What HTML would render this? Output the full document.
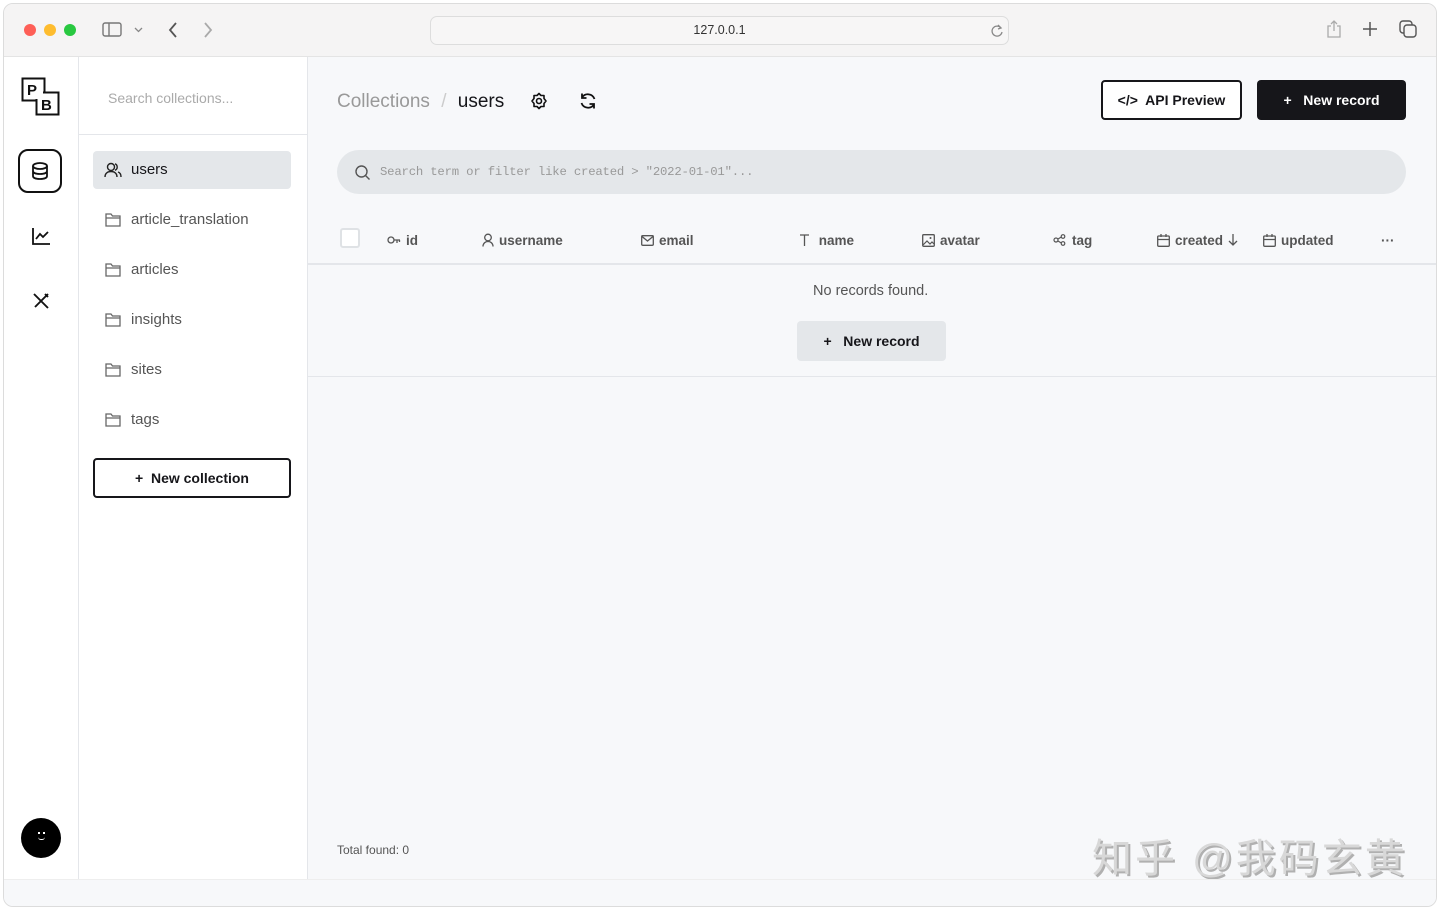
<!DOCTYPE html>
<html><head><meta charset="utf-8"><style>
*{box-sizing:border-box;margin:0;padding:0}
body{width:1440px;height:910px;background:#fff;font-family:"Liberation Sans","Noto Sans CJK SC",sans-serif;position:relative;overflow:hidden;color:#16161a}
.a{position:absolute}
.win{left:3px;top:3px;width:1434px;height:904px;border:1px solid #dcdcdc;border-radius:10px;overflow:hidden;background:#f7f8fa}
.tb{left:0;top:0;width:1434px;height:53px;background:#f5f4f4;border-bottom:1px solid #e4e4e4}
.dot{width:12px;height:12px;border-radius:50%;top:20px}
svg{position:absolute;overflow:visible}
.item{left:89px;width:198px;height:38px;border-radius:4px;font-size:15px;color:#555;}
.item span{position:absolute;left:38px;top:10px}
.th{top:227px;height:18px;font-size:13.5px;font-weight:bold;color:#555;display:flex;align-items:center;gap:5px}
.th svg{position:static}
</style></head><body>
<div class="a win">
 <div class="a tb">
  <div class="a dot" style="left:20px;background:#fe5f57"></div>
  <div class="a dot" style="left:40px;background:#febc2e"></div>
  <div class="a dot" style="left:60px;background:#28c840"></div>
  <svg style="left:98px;top:18px" width="20" height="16"><rect x="1" y="1" width="18" height="13" rx="2" fill="none" stroke="#777" stroke-width="1.4"/><line x1="7" y1="1" x2="7" y2="14" stroke="#777" stroke-width="1.4"/></svg>
  <svg style="left:130px;top:23px" width="10" height="6"><path d="M1 1l3.5 3.5L8 1" fill="none" stroke="#888" stroke-width="1.3"/></svg>
  <svg style="left:164px;top:18px" width="10" height="16"><path d="M8 1L2 8l6 7" fill="none" stroke="#555" stroke-width="1.8"/></svg>
  <svg style="left:199px;top:18px" width="10" height="16"><path d="M2 1l6 7-6 7" fill="none" stroke="#aaa" stroke-width="1.8"/></svg>
  <div class="a" style="left:426px;top:12px;width:579px;height:29px;border:1px solid #ddd;border-radius:7px;background:#f7f6f6;text-align:center;font-size:12.5px;line-height:27px;color:#333">127.0.0.1</div>
  <svg style="left:986px;top:19px" width="14" height="16"><path d="M11 5A5 5 0 1 0 12 9" fill="none" stroke="#888" stroke-width="1.3"/><path d="M8 2l3 3-3 1" fill="none" stroke="#888" stroke-width="1.3"/></svg>
  <svg style="left:1322px;top:15px" width="16" height="20"><path d="M5 7H2v11h12V7h-3M8 12V2M5 5l3-3 3 3" fill="none" stroke="#aaa" stroke-width="1.3"/></svg>
  <svg style="left:1358px;top:17px" width="16" height="16"><path d="M8 1v14M1 8h14" stroke="#555" stroke-width="1.5"/></svg>
  <svg style="left:1395px;top:16px" width="18" height="18"><rect x="1" y="1" width="12" height="12" rx="3" fill="none" stroke="#555" stroke-width="1.4"/><rect x="5" y="5" width="12" height="12" rx="3" fill="#f5f4f4" stroke="#555" stroke-width="1.4"/></svg>
 </div>
 <div class="a" style="left:0;top:53px;width:75px;height:822px;background:#fff;border-right:1px solid #e4e6ea"></div>
 <svg style="left:17px;top:73px" width="44" height="44">
  <rect x="1.5" y="1.5" width="22" height="22" fill="#fff" stroke="#111" stroke-width="2"/>
  <rect x="15.5" y="15.5" width="22" height="22" fill="#fff" stroke="#111" stroke-width="2"/>
  <rect x="3" y="3" width="19" height="19" fill="#fff"/>
  <text x="6" y="18" font-family="Liberation Sans" font-weight="bold" font-size="15" fill="#111">P</text>
  <text x="20" y="33" font-family="Liberation Sans" font-weight="bold" font-size="15" fill="#111">B</text>
 </svg>
 <div class="a" style="left:14px;top:145px;width:44px;height:44px;border:2px solid #111;border-radius:10px"></div>
 <svg style="left:28px;top:158px" width="18" height="20"><ellipse cx="8" cy="4" rx="7" ry="3" fill="none" stroke="#111" stroke-width="1.8"/><path d="M1 4v10c0 2 3 3 7 3s7-1 7-3V4M1 9c0 2 3 3 7 3s7-1 7-3" fill="none" stroke="#111" stroke-width="1.8"/></svg>
 <svg style="left:28px;top:223px" width="20" height="18"><path d="M1 1v16h17M4 12l4-5 3 3 5-5" fill="none" stroke="#111" stroke-width="1.8"/></svg>
 <svg style="left:28px;top:288px" width="18" height="18"><path d="M2 2l14 14M16 2L3 15M13 2l3 3" fill="none" stroke="#111" stroke-width="1.9"/></svg>
 <div class="a" style="left:17px;top:814px;width:40px;height:40px;border-radius:50%;background:#000"></div>
 <div class="a" style="left:34px;top:828px;width:2px;height:2px;background:#fff"></div>
 <div class="a" style="left:39px;top:828px;width:2px;height:2px;background:#fff"></div>
 <div class="a" style="left:34px;top:833px;width:7px;height:3px;border-bottom:1px solid #fff;border-radius:0 0 4px 4px"></div>
 <div class="a" style="left:75px;top:53px;width:229px;height:822px;background:#fff;border-right:1px solid #e4e6ea"></div>
 <div class="a" style="left:104px;top:86px;font-size:14px;color:#aaa">Search collections...</div>
 <div class="a" style="left:75px;top:130px;width:228px;height:1px;background:#e4e6ea"></div>
 <div class="a item" style="top:147px;background:#e4e7ea;color:#16161a"><svg style="left:11px;top:11px" width="18" height="16"><circle cx="7" cy="5" r="3.5" fill="none" stroke="#222" stroke-width="1.4"/><path d="M1 15c0-4 3-5.5 6-5.5s6 1.5 6 5.5M11 1.8a3.5 3.5 0 0 1 0 6.5M14 10c2 .6 3 2 3 5" fill="none" stroke="#222" stroke-width="1.4"/></svg><span>users</span></div>
 <div class="a item" style="top:197px"><svg style="left:12px;top:12px" width="16" height="14"><path d="M1 1h5l1.5 2H15v10H1z M1 5h14" fill="none" stroke="#666" stroke-width="1.3"/></svg><span>article_translation</span></div>
 <div class="a item" style="top:247px"><svg style="left:12px;top:12px" width="16" height="14"><path d="M1 1h5l1.5 2H15v10H1z M1 5h14" fill="none" stroke="#666" stroke-width="1.3"/></svg><span>articles</span></div>
 <div class="a item" style="top:297px"><svg style="left:12px;top:12px" width="16" height="14"><path d="M1 1h5l1.5 2H15v10H1z M1 5h14" fill="none" stroke="#666" stroke-width="1.3"/></svg><span>insights</span></div>
 <div class="a item" style="top:347px"><svg style="left:12px;top:12px" width="16" height="14"><path d="M1 1h5l1.5 2H15v10H1z M1 5h14" fill="none" stroke="#666" stroke-width="1.3"/></svg><span>sites</span></div>
 <div class="a item" style="top:397px"><svg style="left:12px;top:12px" width="16" height="14"><path d="M1 1h5l1.5 2H15v10H1z M1 5h14" fill="none" stroke="#666" stroke-width="1.3"/></svg><span>tags</span></div>
 <div class="a" style="left:89px;top:454px;width:198px;height:40px;border:2px solid #16161a;border-radius:4px;font-size:14px;font-weight:bold;text-align:center;line-height:36px">+&nbsp;&nbsp;New collection</div>
 <div class="a" style="left:333px;top:87px;font-size:19px;color:#999">Collections <span style="color:#ccc;margin:0 6px">/</span> <span style="color:#16161a">users</span></div>
 <svg style="left:526px;top:88px" width="18" height="18"><circle cx="9" cy="9" r="2.5" fill="none" stroke="#111" stroke-width="1.6"/><path d="M9 1.5l2 2h3v3l2 2.5-2 2.5v3h-3l-2 2-2-2H4v-3l-2-2.5 2-2.5v-3h3z" fill="none" stroke="#111" stroke-width="1.6" stroke-linejoin="round"/></svg>
 <svg style="left:575px;top:88px" width="18" height="18"><path d="M15.5 7A7 7 0 0 0 3 5.5M2.5 11a7 7 0 0 0 12.5 1.5M3 1.5V6h4.5M15 16.5V12h-4.5" fill="none" stroke="#111" stroke-width="1.8"/></svg>
 <div class="a" style="left:1097px;top:76px;width:141px;height:40px;border:2px solid #16161a;border-radius:4px;background:#fff;font-size:14px;font-weight:bold;text-align:center;line-height:36px">&lt;/&gt;&nbsp; API Preview</div>
 <div class="a" style="left:1253px;top:76px;width:149px;height:40px;border-radius:4px;background:#16161a;color:#fff;font-size:14px;font-weight:bold;text-align:center;line-height:40px">+&nbsp;&nbsp; New record</div>
 <div class="a" style="left:333px;top:146px;width:1069px;height:44px;border-radius:22px;background:#e4e7ea"></div>
 <svg style="left:351px;top:161px" width="16" height="16"><circle cx="6.5" cy="6.5" r="5.5" fill="none" stroke="#555" stroke-width="1.4"/><path d="M10.5 10.5l4 4" stroke="#555" stroke-width="1.4"/></svg>
 <div class="a" style="left:376px;top:161px;font-family:'Liberation Mono',monospace;font-size:12.3px;letter-spacing:-0.2px;color:#999">Search term or filter like created &gt; "2022-01-01"...</div>
 <div class="a" style="left:336px;top:224px;width:20px;height:20px;border:2px solid #dfe2e5;border-radius:3px;background:#fff"></div>
 <div class="a th" style="left:383px"><svg width="14" height="10"><circle cx="4" cy="5" r="3" fill="none" stroke="#555" stroke-width="1.3"/><path d="M7 5h6M10 5v3M12.5 5v2" stroke="#555" stroke-width="1.3" fill="none"/></svg>id</div>
 <div class="a th" style="left:478px"><svg width="12" height="14"><circle cx="6" cy="4.5" r="3.3" fill="none" stroke="#555" stroke-width="1.3"/><path d="M1 13.5c0-3 2.2-5 5-5s5 2 5 5" fill="none" stroke="#555" stroke-width="1.3"/></svg>username</div>
 <div class="a th" style="left:637px"><svg width="13" height="11"><rect x="0.7" y="0.7" width="11.6" height="9.6" rx="1" fill="none" stroke="#555" stroke-width="1.3"/><path d="M1 1.5l5.5 4.5 5.5-4.5" fill="none" stroke="#555" stroke-width="1.3"/></svg>email</div>
 <div class="a th" style="left:795px"><svg width="11" height="12"><path d="M1 1h9M5.5 1v11" stroke="#555" stroke-width="1.3"/></svg>&nbsp;name</div>
 <div class="a th" style="left:918px"><svg width="13" height="13"><rect x="0.7" y="0.7" width="11.6" height="11.6" rx="1" fill="none" stroke="#555" stroke-width="1.3"/><path d="M1 11l4-4 3 3 2-2 2 2" fill="none" stroke="#555" stroke-width="1.2"/><circle cx="8.5" cy="4" r="1" fill="#555"/></svg>avatar</div>
 <div class="a th" style="left:1049px"><svg width="14" height="12"><circle cx="3" cy="6" r="2" fill="none" stroke="#555" stroke-width="1.2"/><circle cx="10" cy="2.5" r="1.8" fill="none" stroke="#555" stroke-width="1.2"/><circle cx="10" cy="9.5" r="1.8" fill="none" stroke="#555" stroke-width="1.2"/><path d="M5 5l3.3-2M5 7l3.3 2" stroke="#555" stroke-width="1.2"/></svg>tag</div>
 <div class="a th" style="left:1153px"><svg width="13" height="13"><rect x="0.7" y="2" width="11.6" height="10.3" rx="1" fill="none" stroke="#555" stroke-width="1.3"/><path d="M1 5.5h11M4 0v3M9 0v3" stroke="#555" stroke-width="1.3"/></svg>created <svg width="10" height="12"><path d="M5 0v11M1 7l4 4 4-4" fill="none" stroke="#555" stroke-width="1.3"/></svg></div>
 <div class="a th" style="left:1259px"><svg width="13" height="13"><rect x="0.7" y="2" width="11.6" height="10.3" rx="1" fill="none" stroke="#555" stroke-width="1.3"/><path d="M1 5.5h11M4 0v3M9 0v3" stroke="#555" stroke-width="1.3"/></svg>updated</div>
 <div class="a th" style="left:1377px">···</div>
 <div class="a" style="left:304px;top:259px;width:1130px;height:2px;background:#e4e6ea"></div>
 <div class="a" style="left:809px;top:279px;font-size:14.5px;color:#555">No records found.</div>
 <div class="a" style="left:793px;top:317px;width:149px;height:40px;border-radius:4px;background:#e4e7ea;font-size:14px;font-weight:bold;text-align:center;line-height:40px">+&nbsp;&nbsp; New record</div>
 <div class="a" style="left:304px;top:372px;width:1130px;height:1px;background:#e4e6ea"></div>
 <div class="a" style="left:333px;top:839px;font-size:12px;color:#555">Total found: 0</div>
 <div class="a" style="left:1088px;top:822px;font-size:40px;color:#d8d8d8;text-shadow:2px 2px 0 #b0b0b0;letter-spacing:3px">知乎 @我码玄黄</div>
 <div class="a" style="left:0;top:875px;width:1434px;height:29px;background:#f7f8fa;border-top:1px solid #eee"></div>
</div>
</body></html>
